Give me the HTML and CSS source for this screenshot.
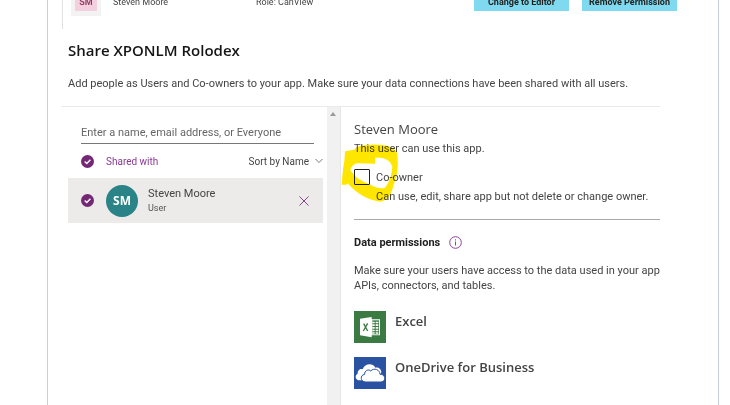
FILE: index.html
```html
<!DOCTYPE html>
<html lang="en">
<head>
<meta charset="utf-8">
<title>Share XPONLM Rolodex</title>
<link rel="stylesheet" href="styles.css">
</head>
<body>
<main class="frame">
  <section class="member">
    <span class="tile"><span class="tile-initials">SM</span></span>
    <span class="member-name">Steven Moore</span>
    <span class="member-role">Role: CanView</span>
    <button class="action" type="button">Change to Editor</button>
    <button class="action" type="button">Remove Permission</button>
  </section>

  <h1 class="title">Share XPONLM Rolodex</h1>
  <p class="intro">Add people as Users and Co-owners to your app. Make sure your data connections have been shared with all users.</p>

  <div class="panels">
    <section class="people">
      <input class="search" type="text" aria-label="People to share with" placeholder="Enter a name, email address, or Everyone">
      <div class="list-head">
        <svg class="check" viewBox="0 0 12 12"><circle cx="6" cy="6" r="6"/><path d="M3.4 6.1l1.9 1.8 3.4-3.5"/></svg>
        <span class="shared">Shared with</span>
        <button class="sort" type="button">Sort by Name
          <svg class="chevron" viewBox="0 0 8 8"><path d="M.5 2l3.500 3.500L7.500 2"/></svg>
        </button>
      </div>
      <div class="person">
        <svg class="check" viewBox="0 0 12 12"><circle cx="6" cy="6" r="6"/><path d="M3.4 6.1l1.9 1.8 3.4-3.5"/></svg>
        <span class="avatar">SM</span>
        <span class="person-text"><span class="person-name">Steven Moore</span><span class="person-kind">User</span></span>
        <button class="remove" type="button" aria-label="Remove Steven Moore"><svg viewBox="0 0 10 10"><path d="M.5.5l9 9M9.500.5l-9 9"/></svg></button>
      </div>
    </section>
    <div class="scrollbar"><svg viewBox="0 0 6 4"><path d="M0 4L3 0l3 4z"/></svg></div>
    <section class="details">
      <h2 class="user-name">Steven Moore</h2>
      <p class="user-note">This user can use this app.</p>
      <div class="owner">
        <svg class="marker" viewBox="60 130 174 180"><path fill-rule="evenodd" d="M72 155L100 150Q105 137 150 135Q215 133 228 160Q236 210 218 255Q208 300 178 306Q120 298 80 251L76 255H62Q66 200 70 185ZM88 212Q92 195 108 191L162 192V174Q205 172 214 200Q212 240 192 264Q176 270 150 256Q105 240 88 212Z"/></svg>
        <input class="box" type="checkbox" id="co-owner">
        <label class="owner-label" for="co-owner">Co-owner</label>
      </div>
      <p class="owner-note">Can use, edit, share app but not delete or change owner.</p>
      <h3 class="data-title">Data permissions
        <svg class="info" viewBox="0 0 13 13"><circle cx="6.500" cy="6.500" r="5.800"/><path d="M6.500 5.500v4M6.500 3.300v1.200"/></svg>
      </h3>
      <p class="data-note">Make sure your users have access to the data used in your app,<br>APIs, connectors, and tables.</p>
      <ul class="sources">
        <li class="source">
          <svg class="logo" viewBox="0 0 96 96"><path fill="#3b7a43" d="M0 0h96v96H0z"/><path fill="#fff" d="M18 23l35-5v61l-35-6zM53 25h25v48H53z"/><path fill="#3b7a43" d="M55 28h20v42H55z"/><path fill="#fff" d="M55 32h7v5h-7zM65 32h8v5h-8zM55 40h7v5h-7zM65 40h8v5h-8zM55 48h7v5h-7zM65 48h8v5h-8zM55 56h7v5h-7zM65 56h8v5h-8zM55 64h7v4h-7zM65 64h8v4h-8z"/><path fill="none" stroke="#3b7a43" stroke-width="4" d="M29 38l12 22M41 37L28 60"/></svg>
          <span class="source-name">Excel</span>
        </li>
        <li class="source">
          <svg class="logo" viewBox="0 0 96 96"><path fill="#2a52a3" d="M0 0h96v96H0z"/><path fill="#fff" d="M17 70C4 70 1 55 11 50c-1-9 8-16 15-13 6-18 30-20 38-5 10-2 18 5 18 14l-10 24z"/><path fill="#fff" stroke="#2a52a3" stroke-width="3" d="M35 75c-16 0-18-21-3-23-1-11 12-17 18-10 10-11 28-4 28 10 18-1 18 23 3 23z"/></svg>
          <span class="source-name">OneDrive for Business</span>
        </li>
      </ul>
    </section>
  </div>
</main>
</body>
</html>
```
FILE: styles.css
```css
* { box-sizing: border-box; }

body {
  margin: 0;
  overflow: hidden;
  background: #fff;
  color: #444;
  font: 11px/15px Roboto, "Noto Sans", sans-serif;
}

h1, h2, h3, p, ul { margin: 0; padding: 0; }

button {
  border: 0;
  padding: 0;
  background: none;
  color: inherit;
  font: inherit;
}

svg { display: block; fill: none; }

.frame {
  min-height: 100vh;
  margin: 0 11px 0 47px;
  padding-left: 13px;
  border-left: 1px solid #cdced8;
  border-right: 1px solid #c5cddd;
}

.member {
  display: flex;
  align-items: flex-start;
  height: 45px;
  margin: -16px 0 0 1px;
  padding-right: 41px;
  border-left: 1px solid #e1e1e1;
  font-size: 9px;
}

.tile {
  width: 30px;
  height: 32px;
  margin-left: 8px;
  padding: 0 4px 5px;
  background: #f3f3f3;
}

.tile-initials {
  display: block;
  height: 27px;
  padding-top: 9px;
  background: #f4cfdd;
  color: #8b3a5f;
  font-weight: 600;
  line-height: 18px;
  text-align: center;
}

.member-name { flex: 0 1 143px; margin: 11px 0 0 12px; }
.member-role { flex: 1; margin-top: 11px; }

.action {
  width: 95px;
  height: 27px;
  padding-top: 9px;
  background: #80daef;
  color: #222;
  font-weight: 700;
  line-height: 18px;
}

.action + .action { margin-left: 13px; }

.title {
  margin: 10px 0 0 7px;
  color: #161616;
  font-family: "Open Sans", "Noto Sans", sans-serif;
  font-size: 15px;
  font-weight: 600;
  line-height: 22px;
}

.intro { margin: 15px 0 15px 7px; white-space: nowrap; }

.panels {
  display: flex;
  min-height: 299px;
  margin-right: 58px;
  border-top: 1px solid #eaeaea;
}

.people { flex: 0 0 266px; padding: 14px 4px 0 7px; }

.search {
  display: block;
  width: 233px;
  height: 23px;
  margin-left: 13px;
  padding: 0;
  border: 0;
  border-bottom: 1px solid #777;
  outline: 0;
  background: none;
  font: inherit;
}

.search::placeholder { color: #666; opacity: 1; }

.list-head {
  display: flex;
  align-items: center;
  height: 34px;
  padding-left: 13px;
  font-size: 10px;
}

.check { flex: none; width: 13px; height: 13px; }
.check circle { fill: #742774; }
.check path { stroke: #fff; stroke-width: 1.3; }

.shared { flex: 1; margin-left: 12px; color: #8a3a94; }

.sort { display: flex; align-items: center; gap: 6px; }
.chevron { width: 8px; height: 8px; stroke: #777; stroke-width: 1; }

.person {
  display: flex;
  align-items: center;
  height: 45px;
  padding: 0 14px 0 13px;
  background: #edebe9;
}

.avatar {
  width: 32px;
  height: 32px;
  margin-left: 12px;
  border-radius: 50%;
  background: #2a8387;
  color: #fff;
  font-family: "Open Sans", "Noto Sans", sans-serif;
  font-size: 12px;
  font-weight: 700;
  line-height: 32px;
  text-align: center;
}

.person-text { display: flex; flex: 1; flex-direction: column; margin-left: 10px; }
.person-name { font-size: 11px; line-height: 14px; }
.person-kind { color: #555; font-size: 9px; line-height: 14px; }

.remove svg { width: 10px; height: 10px; stroke: #8a4590; stroke-width: 1; }

.scrollbar { flex: 0 0 14px; padding: 5px 0 0 3px; border-right: 1px solid #e5e5e5; background: #f1f1f1; }
.scrollbar svg { width: 6px; height: 4px; fill: #999; }

.details { flex: 1; min-width: 0; padding: 13px 0 0 13px; overflow: hidden; }

.user-name {
  font-family: "Open Sans", "Noto Sans", sans-serif;
  font-size: 13px;
  font-weight: 400;
  line-height: 18px;
}
.user-note { margin-top: 3px; }

.owner { position: relative; display: flex; align-items: center; height: 16px; margin-top: 13px; }

.marker {
  position: absolute;
  z-index: 1;
  top: -26px;
  left: -13px;
  width: 58px;
  height: 60px;
  fill: #ffe600;
  mix-blend-mode: multiply;
  pointer-events: none;
}

.box {
  width: 16px;
  height: 16px;
  margin: 0;
  border: 1px solid #222;
  border-radius: 1px;
  appearance: none;
}

.owner-label { margin-left: 6px; }

.owner-note {
  padding: 4px 0 15px 22px;
  border-bottom: 1px solid #aaa;
  white-space: nowrap;
}

.data-title {
  display: flex;
  align-items: center;
  gap: 9px;
  margin-top: 15px;
  color: #222;
  font-size: 11px;
  font-weight: 700;
  line-height: 15px;
}

.info { width: 13px; height: 13px; stroke: #8a4590; stroke-width: 1; }

.data-note { margin-top: 13px; white-space: nowrap; }

.sources { display: grid; gap: 14px; margin-top: 18px; list-style: none; }
.source { display: flex; gap: 9px; }
.logo { width: 32px; height: 32px; }
.source-name {
  font-family: "Open Sans", "Noto Sans", sans-serif;
  font-size: 13px;
  font-weight: 600;
  line-height: 20px;
}
```
